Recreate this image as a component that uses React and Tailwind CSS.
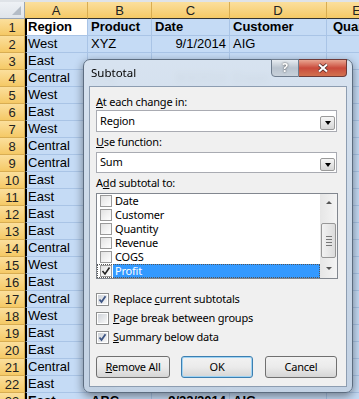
const SHEET = "font-['Liberation_Sans',Arial,sans-serif]"
const UI = "font-['Noto_Sans','Open_Sans',sans-serif]"

const regions = ['West', 'East', 'Central', 'West', 'East', 'West', 'Central', 'Central', 'East', 'East', 'East', 'East', 'Central', 'West', 'East', 'Central', 'West', 'East', 'East', 'Central', 'East']
const products = ['XYZ', '', 'XYZ', 'DEF', 'ABC', 'XYZ', 'DEF', 'ABC', 'XYZ', 'DEF', 'ABC', 'XYZ', 'DEF', 'ABC', 'XYZ', 'DEF', 'ABC', 'XYZ', 'DEF', 'ABC', 'XYZ']
const customers = ['AIG', '', 'Exxon', 'AIG', 'GE', 'Ford', 'IBM', 'AIG', 'GE', 'Exxon', 'IBM', 'Ford', 'AIG', 'GE', 'IBM', 'Ford', 'Exxon', 'AIG', 'GE', 'IBM', 'Ford']

const cols = ['A', 'B', 'C', 'D', 'E']
const cell = 'h-[17px] border-r border-b border-[#a9c4e6] bg-[#c5dbf5] px-[3px] leading-[16px] whitespace-nowrap overflow-hidden'
const hdr = 'border-r border-b border-[#d8ad52] bg-gradient-to-b from-[#fbdf9c] to-[#f5c965] text-[#222] text-center'

function Sheet() {
  return (
    <div className={`${SHEET} text-[13px] text-black`}>
      <div className="h-[2px] bg-[#dfe3e8]" />
      <div className="grid grid-cols-[25px_63px_64px_78px_97px_60px]">
        <div className="h-[17px] border-r border-b border-[#9aa5b3] bg-gradient-to-b from-[#eef1f5] to-[#dfe4ea] relative">
          <div className="absolute right-[3px] bottom-[3px] w-0 h-0 border-l-[9px] border-l-transparent border-b-[9px] border-b-[#b4bcc6]" />
        </div>
        {cols.map((c) => (
          <div key={c} className={`${hdr} h-[17px] leading-[17px] !border-b-[#333]`}>{c}</div>
        ))}

        <div className={`${hdr} h-[17px] leading-[17px]`}>1</div>
        <div className="h-[17px] border-l-2 border-l-black border-r border-b border-r-[#a9c4e6] border-b-[#a9c4e6] bg-white pl-[1px] leading-[16px] font-bold">Region</div>
        <div className={`${cell} font-bold`}>Product</div>
        <div className={`${cell} font-bold`}>Date</div>
        <div className={`${cell} font-bold`}>Customer</div>
        <div className={`${cell} font-bold pl-[6px]`}>Quantity</div>

        {regions.map((r, i) => (
          <Row key={i} n={i + 2} region={r} product={products[i]} customer={customers[i]} />
        ))}

        <div className={`${hdr} h-[17px] leading-[17px]`}>23</div>
        <div className="h-[17px] border-l-2 border-l-black border-b border-[#a9c4e6] bg-[#c5dbf5] pl-[1px] leading-[16px] font-bold">East</div>
        <div className={`${cell} font-bold`}>ABC</div>
        <div className={`${cell} font-bold text-right`}>9/22/2014</div>
        <div className={`${cell} font-bold`}>AIG</div>
        <div className={cell} />
      </div>
    </div>
  )
}

function Row({ n, region, product, customer }) {
  return (
    <>
      <div className={`${hdr} h-[17px] leading-[17px]`}>{n}</div>
      <div className="h-[17px] border-l-2 border-l-black border-r border-b border-r-[#a9c4e6] border-b-[#a9c4e6] bg-[#c5dbf5] pl-[1px] leading-[16px]">{region}</div>
      <div className={cell}>{product}</div>
      <div className={`${cell} text-right`}>{product ? `9/${n - 1}/2014` : ''}</div>
      <div className={cell}>{customer}</div>
      <div className={cell} />
    </>
  )
}

function Check({ checked }) {
  return (
    <span className="w-[13px] h-[13px] border border-[#8e8f8f] bg-white p-px shrink-0 inline-flex">
      <span className="flex-1 bg-gradient-to-br from-[#cfd3d9] to-[#f7f7f7] relative">
        {checked && (
          <svg viewBox="0 0 9 9" className="absolute inset-0 w-[9px] h-[9px]">
            <path d="M1.5 4.5 L3.5 7 L7.5 1.2" fill="none" stroke="#3d5584" strokeWidth="1.8" />
          </svg>
        )}
      </span>
    </span>
  )
}

function ListCheck({ checked }) {
  return (
    <span className="w-[12px] h-[12px] border border-[#9a9a9a] bg-gradient-to-br from-[#e2e2e2] to-white shrink-0 relative">
      {checked && (
        <svg viewBox="0 0 10 10" className="absolute inset-0 w-[10px] h-[10px]">
          <path d="M1.5 5 L4 8 L8.5 1.5" fill="none" stroke="#222" strokeWidth="1.6" />
        </svg>
      )}
    </span>
  )
}

function Combo({ value, h }) {
  return (
    <div className={`${h} relative border border-[#a9abb2] bg-white pl-[3px] flex items-center`}>
      <span>{value}</span>
      <div className="absolute right-px top-[5px] bottom-px w-[15px] border border-[#9a9a9a] rounded-[2px] bg-gradient-to-b from-[#f6f6f6] to-[#d6d6d6] flex items-center justify-center">
        <span className="w-0 h-0 border-l-[3.5px] border-r-[3.5px] border-t-[4px] border-l-transparent border-r-transparent border-t-black" />
      </div>
    </div>
  )
}

const items = ['Date', 'Customer', 'Quantity', 'Revenue', 'COGS', 'Profit']

function ListBox() {
  return (
    <div className="h-[86px] w-[242px] border border-[#82878f] bg-white flex">
      <div className="flex-1 flex flex-col">
        {items.map((it) => {
          const sel = it === 'Profit'
          return (
            <div key={it} className={`h-[14px] flex items-center pl-[3px] ${sel ? 'outline outline-1 outline-dotted outline-[#555] -outline-offset-1' : ''}`}>
              <ListCheck checked={sel} />
              <span className={`ml-px pl-[2px] flex-1 h-[14px] leading-[14px] ${sel ? 'bg-[#3399ff] text-white' : ''}`}>{it}</span>
            </div>
          )
        })}
      </div>
      <div className="w-[17px] bg-gradient-to-r from-[#e6e6e6] to-[#f4f4f4] flex flex-col items-center">
        <div className="h-[17px] flex items-center justify-center">
          <span className="w-0 h-0 border-l-[3px] border-r-[3px] border-b-[3px] border-l-transparent border-r-transparent border-b-[#555]" />
        </div>
        <div className="mt-[12px] w-[15px] h-[35px] rounded-[2px] border border-[#979797] bg-gradient-to-r from-[#f2f2f2] to-[#dcdcdc] flex flex-col items-center justify-center gap-[2px]">
          <span className="w-[6px] h-px bg-[#777]" />
          <span className="w-[6px] h-px bg-[#777]" />
          <span className="w-[6px] h-px bg-[#777]" />
          <span className="w-[6px] h-px bg-[#777]" />
        </div>
        <div className="flex-1 flex items-center justify-center">
          <span className="w-0 h-0 border-l-[3px] border-r-[3px] border-t-[3px] border-l-transparent border-r-transparent border-t-[#555]" />
        </div>
      </div>
    </div>
  )
}

function Button({ children, w, primary }) {
  return (
    <div className={`${w} h-[22px] rounded-[3px] border ${primary ? 'border-[#3c7fb1] shadow-[inset_0_0_0_1px_#9fd3f3]' : 'border-[#707070]'} bg-gradient-to-b from-[#f2f2f2] via-[#ebebeb] to-[#d5d5d5] flex items-center justify-center`}>
      {children}
    </div>
  )
}

function Dialog() {
  return (
    <div className={`${UI} absolute left-[83px] top-[59px] w-[270px] h-[334px] rounded-[7px] border border-[#5d6d80] bg-gradient-to-b from-[#d8e3ef]/95 via-[#cbd8e6]/95 to-[#c2d1e2]/95 backdrop-blur-[3px] shadow-[0_3px_10px_rgba(0,0,0,0.45)] flex flex-col text-[11px] tracking-[-0.2px] text-black`}>
      <div className="h-[26px] relative pl-[7px] flex items-center text-[11.5px] tracking-normal">
        Subtotal
        <div className="absolute top-[-1px] right-[5px] flex h-[18px]">
          <div className="w-[28px] rounded-bl-[4px] border border-[#6f7d8e] bg-gradient-to-b from-[#e7ecf1] via-[#b9c3ce] to-[#c8d1da] flex items-center justify-center text-white font-bold text-[12px] leading-none [text-shadow:0_0_2px_#333]">?</div>
          <div className="w-[48px] rounded-br-[4px] border border-l-0 border-[#6d3a38] bg-gradient-to-b from-[#e8a592] via-[#c94a3c] to-[#d2714f] flex items-center justify-center">
            <svg viewBox="0 0 12 10" className="w-[12px] h-[10px]">
              <path d="M2 1.5 L10 8.5 M10 1.5 L2 8.5" stroke="#3b1a1a" strokeWidth="3.4" />
              <path d="M2 1.5 L10 8.5 M10 1.5 L2 8.5" stroke="white" strokeWidth="2.2" />
            </svg>
          </div>
        </div>
      </div>
      <div className="mx-[5px] mb-[5px] flex-1 border border-[#8d9db1] bg-[#f0f0f0] pl-[6px] pt-[7px] flex flex-col">
        <div className="h-[16px] leading-[16px]"><u>A</u>t each change in:</div>
        <div className="w-[241px]"><Combo value="Region" h="h-[22px]" /></div>
        <div className="mt-[2px] h-[16px] leading-[16px]"><u>U</u>se function:</div>
        <div className="mt-[2px] w-[241px]"><Combo value="Sum" h="h-[21px]" /></div>
        <div className="mt-[2px] h-[16px] leading-[16px]">A<u>d</u>d subtotal to:</div>
        <div className="mt-[2px]"><ListBox /></div>
        <div className="mt-[11px] flex flex-col">
          <label className="h-[19px] flex items-center gap-[4px]"><Check checked /><span>Replace <u>c</u>urrent subtotals</span></label>
          <label className="h-[19px] flex items-center gap-[4px]"><Check /><span><u>P</u>age break between groups</span></label>
          <label className="h-[19px] flex items-center gap-[4px]"><Check checked /><span><u>S</u>ummary below data</span></label>
        </div>
        <div className="mt-[9px] flex gap-[11px]">
          <Button w="w-[74px]"><span><u>R</u>emove All</span></Button>
          <Button w="w-[72px]" primary>OK</Button>
          <div className="ml-px"><Button w="w-[72px]">Cancel</Button></div>
        </div>
      </div>
    </div>
  )
}

export default function App() {
  return (
    <div className="relative w-[359px] h-[399px] overflow-hidden bg-white">
      <Sheet />
      <Dialog />
    </div>
  )
}
